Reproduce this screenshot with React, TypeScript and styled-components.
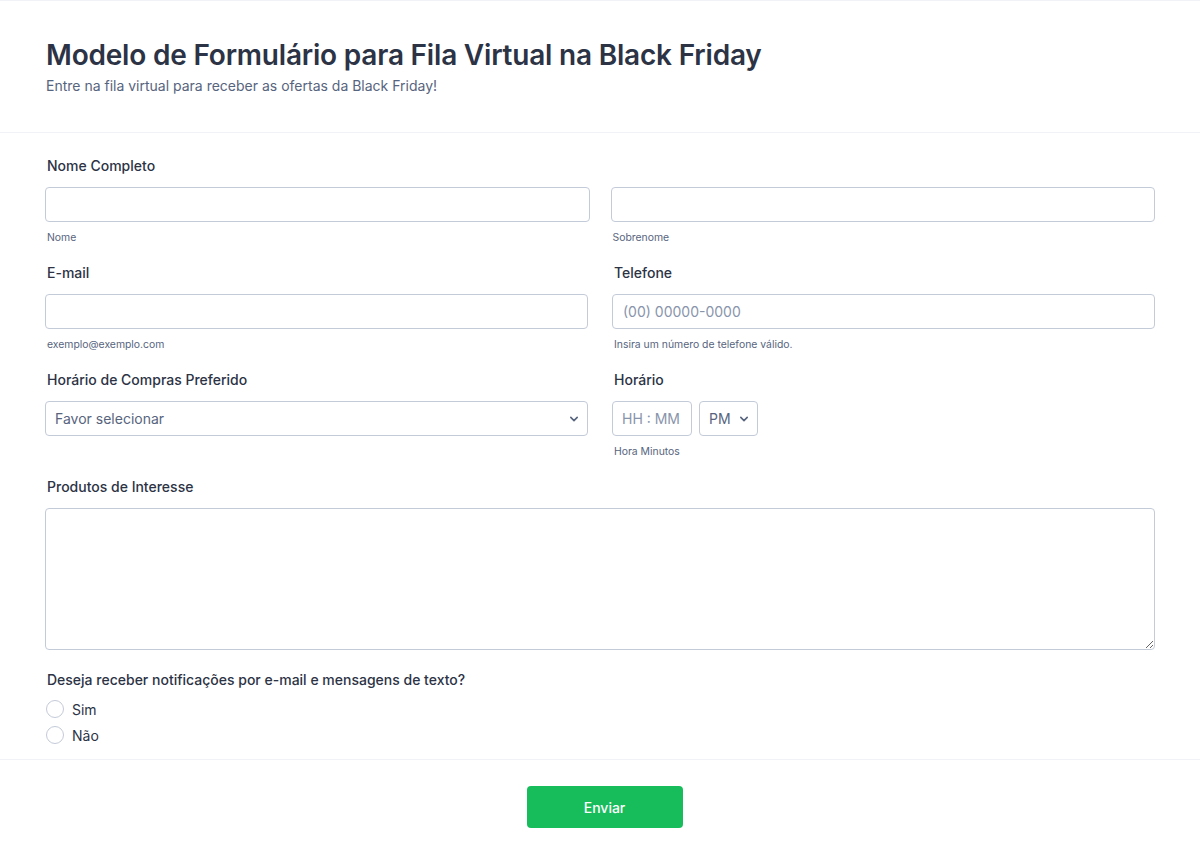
import React, { FC, ReactNode } from 'react'
import styled, { createGlobalStyle } from 'styled-components'

const GlobalStyle = createGlobalStyle`
  html, body {
    margin: 0;
    padding: 0;
    background: #ffffff;
  }
  body {
    font-family: Inter, 'Noto Sans', 'Liberation Sans', sans-serif;
    color: #2c3345;
  }
  * {
    box-sizing: border-box;
  }
`

const Chevron: FC<{ size?: number }> = ({ size = 10 }) => (
  <svg width={size} height={size} viewBox="0 0 10 10" fill="none">
    <path d="M1.8 3.4 L5 6.6 L8.2 3.4" stroke="#57647e" strokeWidth="1.6" strokeLinecap="round" strokeLinejoin="round" />
  </svg>
)

interface FieldProps {
  label?: string
  sublabel?: string
  children: ReactNode
  wide?: boolean
}

const Field: FC<FieldProps> = ({ label, sublabel, children, wide }) => (
  <FieldWrapper wide={wide}>
    {label && <Label>{label}</Label>}
    {children}
    {sublabel && <SubLabel>{sublabel}</SubLabel>}
  </FieldWrapper>
)

export default function App() {
  return (
    <Page>
      <GlobalStyle />
      <Header>
        <Title>Modelo de Formulário para Fila Virtual na Black Friday</Title>
        <Subtitle>Entre na fila virtual para receber as ofertas da Black Friday!</Subtitle>
      </Header>

      <FormBody>
        <FieldWrapper wide>
          <Label>Nome Completo</Label>
          <NameRow>
            <div>
              <TextInput type="text" />
              <SubLabel>Nome</SubLabel>
            </div>
            <div>
              <TextInput type="text" />
              <SubLabel>Sobrenome</SubLabel>
            </div>
          </NameRow>
        </FieldWrapper>

        <Field label="E-mail" sublabel="exemplo@exemplo.com">
          <TextInput type="email" />
        </Field>
        <Field label="Telefone" sublabel="Insira um número de telefone válido.">
          <TextInput type="tel" placeholder="(00) 00000-0000" />
        </Field>

        <Field label="Horário de Compras Preferido">
          <SelectBox>
            <Select defaultValue="">
              <option value="">Favor selecionar</option>
              <option>Manhã</option>
              <option>Tarde</option>
              <option>Noite</option>
            </Select>
            <SelectIcon right={9}>
              <Chevron />
            </SelectIcon>
          </SelectBox>
        </Field>
        <Field label="Horário" sublabel="Hora Minutos">
          <TimeRow>
            <TimeInput type="text" placeholder="HH : MM" />
            <SelectBox width={59}>
              <Select defaultValue="PM">
                <option>AM</option>
                <option>PM</option>
              </Select>
              <SelectIcon right={9}>
                <Chevron />
              </SelectIcon>
            </SelectBox>
          </TimeRow>
        </Field>

        <Field label="Produtos de Interesse" wide>
          <TextArea />
        </Field>

        <FieldWrapper wide>
          <Label>Deseja receber notificações por e-mail e mensagens de texto?</Label>
          <RadioList>
            <RadioRow>
              <RadioCircle type="radio" name="notify" />
              <span>Sim</span>
            </RadioRow>
            <RadioRow>
              <RadioCircle type="radio" name="notify" />
              <span>Não</span>
            </RadioRow>
          </RadioList>
        </FieldWrapper>
      </FormBody>

      <Footer>
        <SubmitButton type="button">Enviar</SubmitButton>
      </Footer>
    </Page>
  )
}

const Page = styled.div`
  width: 1200px;
  min-height: 862px;
  border-top: 1px solid #f1f2f8;
  background: #ffffff;
`

const Header = styled.header`
  padding: 37px 45px 36px 46px;
  border-bottom: 1px solid #f1f2f8;
`

const Title = styled.h1`
  margin: 0;
  font-size: 28px;
  line-height: 34px;
  font-weight: 600;
  color: #2c3345;
  letter-spacing: -0.2px;
`

const Subtitle = styled.p`
  margin: 4px 0 0;
  font-size: 14px;
  line-height: 20px;
  color: #57647e;
`

const FormBody = styled.div`
  display: grid;
  grid-template-columns: 1fr 1fr;
  column-gap: 24px;
  row-gap: 17px;
  padding: 23px 45px 11px;
`

const FieldWrapper = styled.div<{ wide?: boolean }>`
  grid-column: ${({ wide }) => (wide ? '1 / -1' : 'auto')};
  min-width: 0;
`

const NameRow = styled.div`
  display: grid;
  grid-template-columns: 1fr 1fr;
  column-gap: 21px;
`

const Label = styled.label`
  display: block;
  padding-left: 2px;
  margin-bottom: 11px;
  font-size: 14px;
  line-height: 20px;
  font-weight: 500;
  color: #2c3345;
`

const SubLabel = styled.span`
  display: block;
  margin-top: 8px;
  padding-left: 2px;
  font-size: 10.4px;
  line-height: 16px;
  color: #57647e;
`

const TextInput = styled.input`
  display: block;
  width: 100%;
  height: 35px;
  padding: 0 10px;
  border: 1px solid #c3cad8;
  border-radius: 4px;
  background: #ffffff;
  font-family: inherit;
  font-size: 14px;
  color: #2c3345;
  outline: none;

  &::placeholder {
    color: #8894ab;
  }
`

const TimeRow = styled.div`
  display: flex;
  gap: 7px;
`

const TimeInput = styled(TextInput)`
  width: 80px;
  padding: 0 9px;
`

const SelectBox = styled.div<{ width?: number }>`
  position: relative;
  width: ${({ width }) => (width ? `${width}px` : '100%')};
`

const Select = styled.select`
  display: block;
  width: 100%;
  height: 35px;
  padding: 0 9px;
  border: 1px solid #c3cad8;
  border-radius: 4px;
  background: #ffffff;
  font-family: inherit;
  font-size: 14px;
  color: #57647e;
  appearance: none;
  outline: none;
`

const SelectIcon = styled.span<{ right: number }>`
  position: absolute;
  top: 50%;
  right: ${({ right }) => right}px;
  transform: translateY(-50%);
  display: flex;
  pointer-events: none;
`

const TextArea = styled.textarea`
  display: block;
  width: 100%;
  height: 142px;
  margin-bottom: 3px;
  padding: 8px 10px;
  border: 1px solid #c3cad8;
  border-radius: 4px;
  font-family: inherit;
  font-size: 14px;
  color: #2c3345;
  outline: none;
`

const RadioList = styled.div`
  display: flex;
  flex-direction: column;
  margin-top: -5px;
`

const RadioRow = styled.label`
  display: flex;
  align-items: center;
  gap: 8px;
  height: 26px;
  font-size: 14px;
  color: #2c3345;
`

const RadioCircle = styled.input`
  appearance: none;
  margin: 0 0 0 1px;
  width: 18px;
  height: 18px;
  border: 1px solid #c3cad8;
  border-radius: 50%;
  background: #ffffff;
`

const Footer = styled.footer`
  display: flex;
  justify-content: center;
  padding: 26px 0 34px 9px;
  border-top: 1px solid #f1f2f8;
`

const SubmitButton = styled.button`
  width: 156px;
  height: 42px;
  border: none;
  border-radius: 4px;
  background: #18bd5b;
  color: #ffffff;
  font-family: inherit;
  font-size: 14px;
  font-weight: 500;
  cursor: pointer;
`
